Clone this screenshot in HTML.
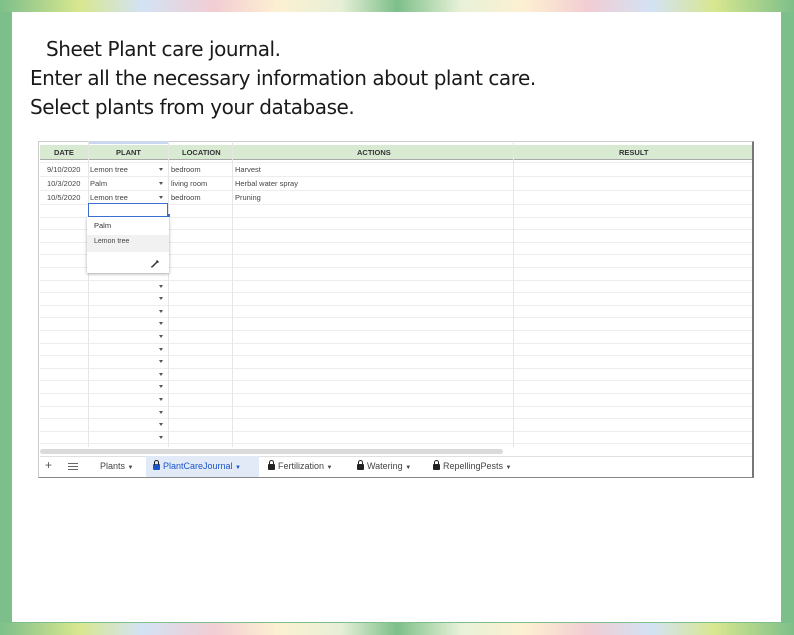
<!DOCTYPE html>
<html><head><style>
*{margin:0;padding:0;box-sizing:border-box}
body{width:794px;height:635px;position:relative;overflow:hidden;background:#7dbf8a;font-family:"Liberation Sans",sans-serif}
.band{position:absolute;left:0;width:794px;height:12px;background:linear-gradient(90deg,#7dbf8a 0%,#d8e78f 10%,#d3e2f4 18%,#f2cdd3 27%,#fdf0d2 35%,#e6efd6 43%,#7dbf8a 50%,#e8f1d8 58%,#fdf0d2 66%,#f2cdd3 74%,#d3e2f4 82%,#d8e78f 90%,#7dbf8a 100%)}
.panel{position:absolute;left:12px;top:12px;width:769px;height:610px;background:#fff}
.t{position:absolute;font-family:"DejaVu Sans","Liberation Sans",sans-serif;font-size:20px;color:#1a1a1a;letter-spacing:-0.45px}
.a{position:absolute}
.sm{font-size:7.5px;color:#444;position:absolute;white-space:nowrap}
.hd{font-size:7.5px;color:#333;position:absolute;font-weight:bold;white-space:nowrap}
.arr{position:absolute;width:0;height:0;border-left:2.5px solid transparent;border-right:2.5px solid transparent;border-top:3px solid #555}
.tab{position:absolute;top:461px;font-size:9px;color:#444;white-space:nowrap}
.lock{display:inline-block;width:7px;height:6px;background:#222;border-radius:1px;position:relative;vertical-align:-1px;margin-right:3px}
.lock:before{content:"";position:absolute;left:1px;top:-4px;width:3px;height:4px;border:1.2px solid #222;border-bottom:none;border-radius:3px 3px 0 0}
</style></head><body>
<div class="band" style="top:0"></div>
<div class="band" style="top:623px"></div>
<div class="panel"></div>
<div class="t" style="left:46px;top:37px">Sheet Plant care journal.</div>
<div class="t" style="left:30px;top:66px">Enter all the necessary information about plant care.</div>
<div class="t" style="left:30px;top:95px">Select plants from your database.</div>

<div class="a" style="left:38px;top:141px;width:716px;height:337px;border:1px solid #ccc;border-right:2px solid #777;border-bottom:1px solid #888;background:#fff"></div>
<div class="a" style="left:88px;top:141px;width:80px;height:3px;background:#c9d8ef"></div>
<div class="a" style="left:40px;top:145px;width:712px;height:15px;background:#d9ead3;border-bottom:1px solid #aaa"></div>
<div class="hd" style="left:54px;top:148px">DATE</div>
<div class="hd" style="left:116px;top:148px">PLANT</div>
<div class="hd" style="left:182px;top:148px">LOCATION</div>
<div class="hd" style="left:357px;top:148px">ACTIONS</div>
<div class="hd" style="left:619px;top:148px">RESULT</div>
<div id="grid"></div>
<div class="sm" style="left:47px;top:165px">9/10/2020</div><div class="sm" style="left:90px;top:165px">Lemon tree</div><div class="sm" style="left:171px;top:165px">bedroom</div><div class="sm" style="left:235px;top:165px">Harvest</div>
<div class="sm" style="left:47px;top:179px">10/3/2020</div><div class="sm" style="left:90px;top:179px">Palm</div><div class="sm" style="left:171px;top:179px">living room</div><div class="sm" style="left:235px;top:179px">Herbal water spray</div>
<div class="sm" style="left:47px;top:193px">10/5/2020</div><div class="sm" style="left:90px;top:193px">Lemon tree</div><div class="sm" style="left:171px;top:193px">bedroom</div><div class="sm" style="left:235px;top:193px">Pruning</div>
<div class="arr" style="left:159px;top:168px"></div><div class="arr" style="left:159px;top:182px"></div><div class="arr" style="left:159px;top:196px"></div>

<div class="a" style="left:87px;top:217px;width:82px;height:56px;background:#fff;box-shadow:0 1px 3px rgba(0,0,0,.35)"></div>
<div class="a" style="left:88px;top:203px;width:80px;height:14px;border:1.5px solid #3a6fd0;background:#fff"></div>
<div class="a" style="left:167px;top:214px;width:3px;height:3px;background:#3a6fd0"></div>
<div class="sm" style="left:94px;top:221px;color:#333">Palm</div>
<div class="a" style="left:87px;top:235px;width:82px;height:17px;background:#f1f1f1"></div>
<div class="sm" style="left:94px;top:238px;font-size:7px">Lemon tree</div>
<svg class="a" style="left:150px;top:259px" width="10" height="10" viewBox="0 0 10 10"><path d="M2 8 L7.5 2.5 M6.5 1.5 L8.5 3.5" stroke="#333" stroke-width="1.5"/><path d="M1.5 8.5 L2 7" stroke="#333" stroke-width="1"/></svg>

<div class="a" style="left:40px;top:449px;width:463px;height:5px;border-radius:3px;background:#dadada"></div>
<div class="a" style="left:40px;top:456px;width:712px;height:21px;background:#fff;border-top:1px solid #e0e0e0"></div>
<div class="tab" style="left:45px;font-size:12px;top:458px;color:#555">+</div>
<div class="a" style="left:68px;top:463px;width:10px;height:1px;background:#666;box-shadow:0 3px 0 #666,0 6px 0 #666"></div>
<div class="tab" style="left:100px">Plants <span style="font-size:6px">▼</span></div>
<div class="a" style="left:146px;top:456px;width:113px;height:21px;background:#e2eaf7"></div>
<div class="tab" style="left:153px;color:#1a56c8"><span class="lock" style="background:#1a56c8"></span>PlantCareJournal <span style="font-size:6px">▼</span></div>
<div class="tab" style="left:268px"><span class="lock"></span>Fertilization <span style="font-size:6px">▼</span></div>
<div class="tab" style="left:357px"><span class="lock"></span>Watering <span style="font-size:6px">▼</span></div>
<div class="tab" style="left:433px"><span class="lock"></span>RepellingPests <span style="font-size:6px">▼</span></div>
<script>
var g=document.getElementById('grid'),h='';
var ys=[162,176,190,204];for(var y=216.6;y<446;y+=12.6)ys.push(Math.round(y));
ys.forEach(function(y){h+='<div class="a" style="left:40px;top:'+y+'px;width:712px;height:1px;background:#ededed"></div>';});
[88,168,232,513].forEach(function(x){h+='<div class="a" style="left:'+x+'px;top:141px;width:1px;height:306px;background:#e6e6e6"></div>';});
for(var i=0;i<ys.length-1;i++){if(ys[i]>=278)h+='<div class="arr" style="left:159px;top:'+(ys[i]+5)+'px"></div>';}
g.innerHTML=h;
</script>
</body></html>
